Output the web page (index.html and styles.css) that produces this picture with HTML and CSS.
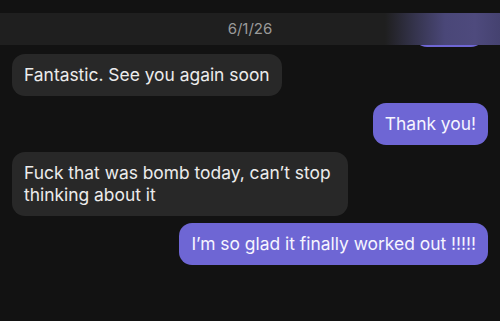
FILE: index.html
```html
<!DOCTYPE html>
<html>
    <head>
        <title>Messages</title>
<link rel="stylesheet" href="styles.css">
    </head>

    <body>
        <div id="screen">
            <div class="thread">
                <div class="bubble sent prev">Same</div>
                <div class="bubble received">Fantastic. See you again soon</div>
                <div class="bubble sent">Thank you!</div>
                <div class="bubble received">Fuck that was bomb today, can’t stop thinking about it</div>
                <div class="bubble sent">I’m so glad it finally worked out !!!!!</div>
            </div>
            <div class="date-bar">6/1/26</div>
        </div>
    </body>
</html>
```

FILE: styles.css
```css
body {
    margin: 0;
    background-color: #121212;
    font-family: Inter, "Noto Sans", sans-serif;
    color: #ececec;
}

#screen {
    position: relative;
    height: 321px;
    overflow: hidden;
}

.thread {
    display: flex;
    flex-direction: column;
    gap: 7px;
    padding: 0 12px;
}

.bubble {
    max-width: 312px;
    padding: 10px 12px;
    font-size: 17.4px;
    line-height: 22px;
    border-radius: 13px;
}

.received {
    align-self: flex-start;
    background-color: #282828;
}

.sent {
    align-self: flex-end;
    background-color: #6e66d4;
    color: #f6f5ff;
}

/* older message, mostly hidden under the date bar */
.prev {
    margin-top: 13px;
    padding: 6px 12px;
    width: 46px;
    margin-right: 4px;
    color: transparent;
}

.date-bar {
    position: absolute;
    top: 13px;
    left: 0;
    right: 0;
    height: 32px;
    line-height: 32px;
    text-align: center;
    font-size: 15px;
    color: #9a9a9a;
    background: linear-gradient(to right, #1f1f1f 0%, #1f1f1f 77%, #35344d 83%, #4a4778 89%, #4e4a7d 95%, #454270 100%);
}
```
